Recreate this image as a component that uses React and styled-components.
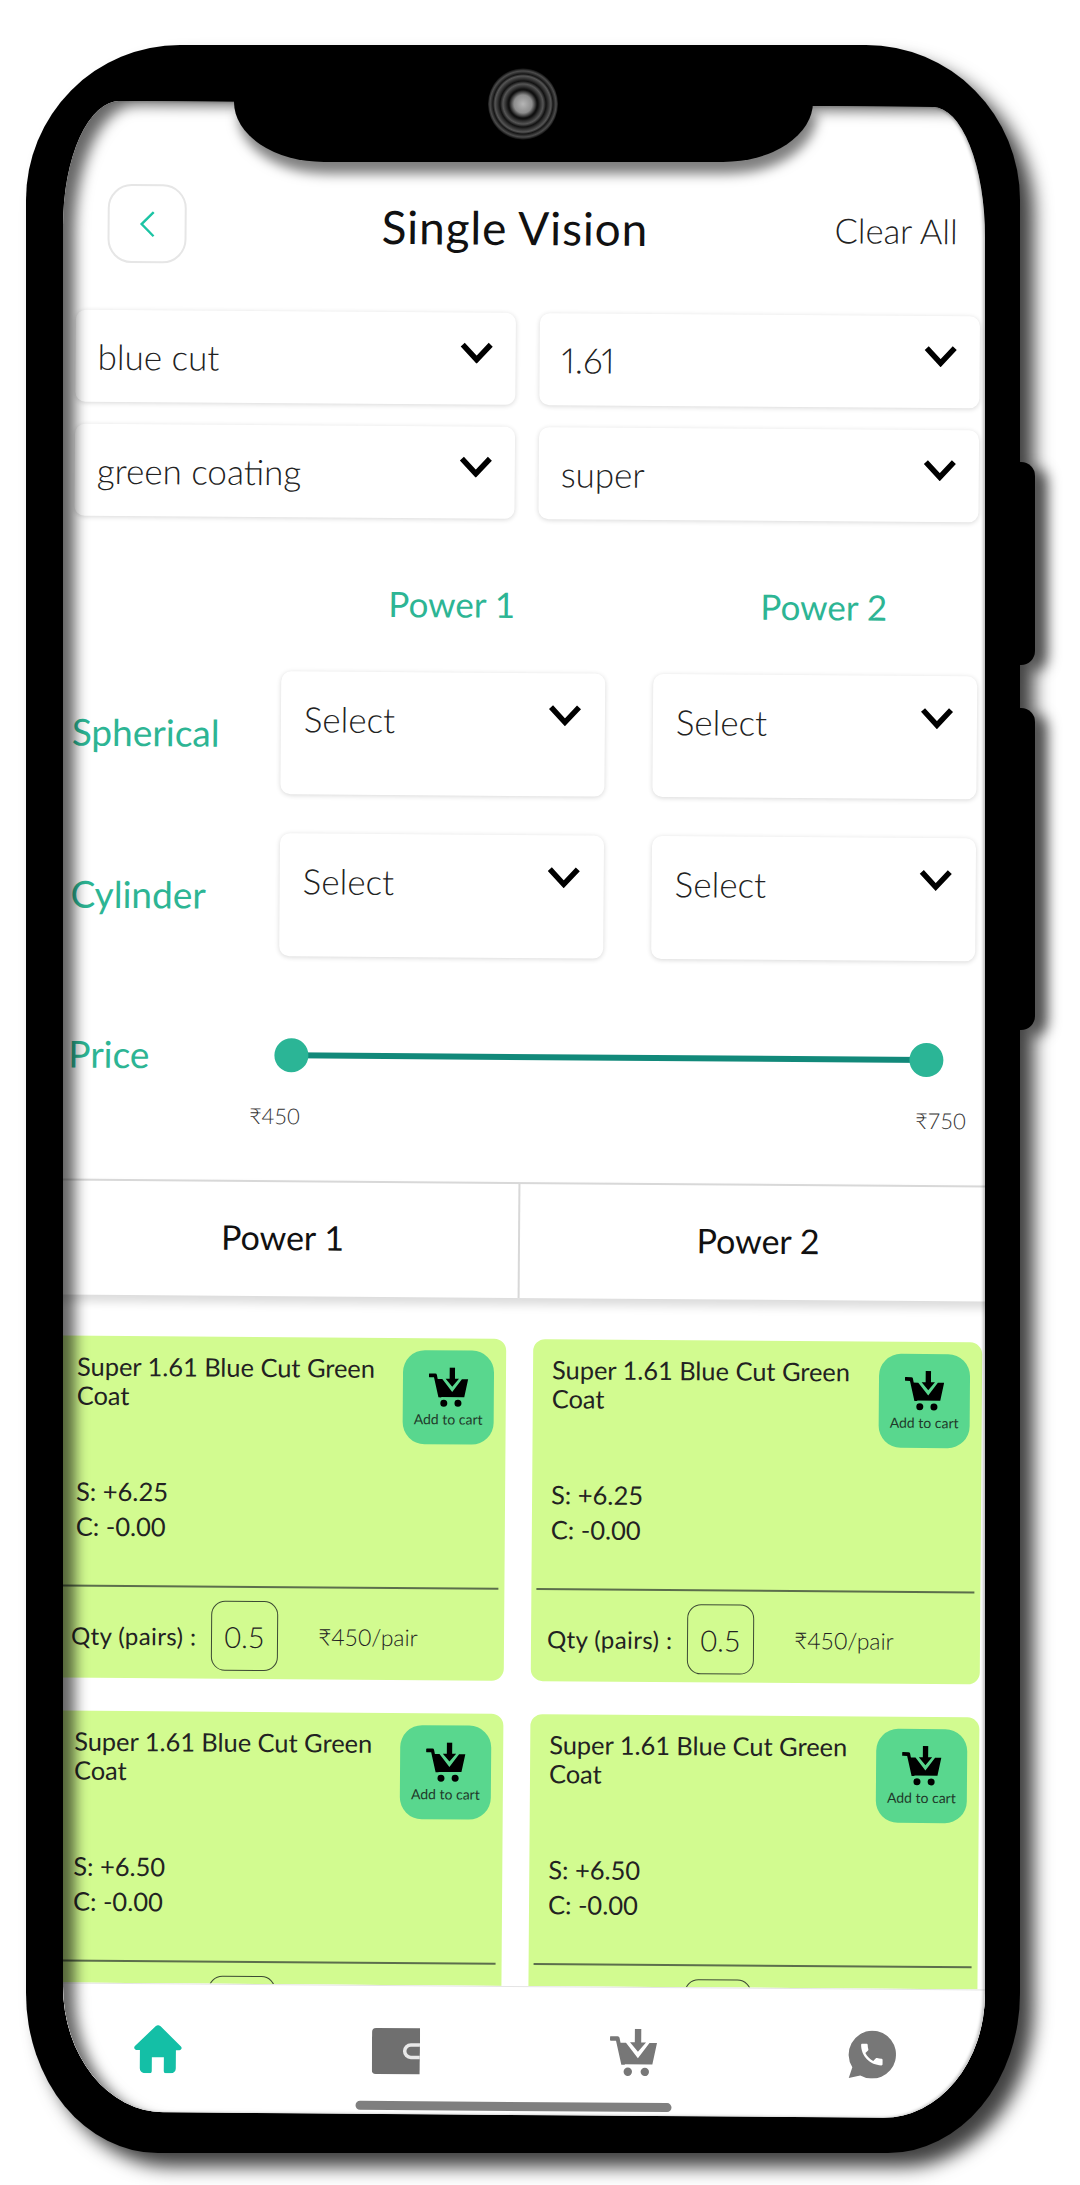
import styled, { createGlobalStyle } from "styled-components";

const GlobalStyle = createGlobalStyle`
  html, body {
    margin: 0;
    width: 1080px;
    height: 2185px;
    overflow: hidden;
    background: #fff;
  }
  * { box-sizing: border-box; }
`;

const Phone = styled.div`
  position: relative;
  width: 994px;
  height: 2108px;
  margin: 45px 0 0 26px;
  padding: 59px 35px 38px 37px;
  background: #000;
  border-radius: 154px 154px 132px 132px / 155px 155px 160px 160px;
  box-shadow: 14px 14px 18px rgba(0, 0, 0, 0.75);
  font-family: Lato, "Noto Sans", sans-serif;
`;

const SideButton = styled.div`
  position: absolute;
  right: -15px;
  top: ${(p) => p.$top}px;
  width: 16px;
  height: ${(p) => p.$height}px;
  background: #000;
  border-radius: 0 14px 14px 0;
  box-shadow: 12px 6px 14px rgba(0, 0, 0, 0.7);
`;

const Notch = styled.div`
  position: absolute;
  z-index: 6;
  left: 208px;
  top: 56px;
  width: 579px;
  height: 61px;
  background: #000;
  border-radius: 0 0 90px 90px / 0 0 60px 60px;
  box-shadow: 4px 12px 12px rgba(0, 0, 0, 0.5);
`;

const Camera = styled.div`
  position: absolute;
  left: 254px;
  top: -33px;
  width: 70px;
  height: 72px;
  border-radius: 50%;
  background: radial-gradient(
    circle,
    #b5b5b5 0,
    #8d8d8d 9px,
    #111 14px,
    #111 15px,
    #555 20px,
    #111 23px,
    #555 28px,
    #151515 30px,
    #4c4c4c 33px,
    #000 36px
  );
`;

const Screen = styled.div`
  position: relative;
  width: 922px;
  height: 2011px;
  background: #fff;
  overflow: hidden;
  border-radius: 57px 52px 102px 100px / 125px 130px 125px 125px;
  transform: skewY(0.43deg);

  &::after {
    content: "";
    position: absolute;
    inset: 0;
    z-index: 5;
    border-radius: inherit;
    pointer-events: none;
    box-shadow: inset 16px 8px 14px -4px rgba(0, 0, 0, 0.6),
      inset -2px 0 3px rgba(0, 0, 0, 0.25);
  }
`;

const Content = styled.div`
  display: flex;
  flex-direction: column;
  height: 100%;
  transform: skewX(-0.43deg);
`;

const Header = styled.header`
  display: flex;
  align-items: center;
  flex-shrink: 0;
  height: 79px;
  margin-top: 83px;
  padding: 0 34px 0 38px;
`;

const BackButton = styled.div`
  display: flex;
  align-items: center;
  justify-content: center;
  width: 79px;
  height: 79px;
  border: 2px solid #e6e6e6;
  border-radius: 24px;
`;

const Title = styled.h1`
  margin: 3px 0 0 195px;
  font-size: 46px;
  font-weight: 400;
  line-height: 56px;
  letter-spacing: 0.85px;
  color: #111;
`;

const ClearAll = styled.div`
  margin: 2px 0 0 auto;
  font-size: 34.5px;
  font-weight: 300;
  line-height: 44px;
  color: #222;
`;

const Filters = styled.div`
  display: grid;
  flex-shrink: 0;
  grid-template-columns: 440px 440px;
  gap: 22px 24px;
  margin-top: 47px;
  padding-left: 7px;
`;

const Box = styled.div`
  display: flex;
  justify-content: space-between;
  background: #fff;
  border-radius: 10px;
  box-shadow: 0 1px 5px rgba(0, 0, 0, 0.16);
`;

const FilterBox = styled(Box)`
  height: 92px;
  align-items: center;
  padding: 0 22px;
`;

const BoxText = styled.span`
  font-size: 35px;
  font-weight: 300;
  line-height: 38px;
  font-variant-numeric: proportional-nums;
  color: #222;
`;

const FilterChevron = styled.svg`
  width: 34px;
  height: 22px;
  margin-top: -12px;
`;

const PowerGrid = styled.div`
  display: grid;
  flex-shrink: 0;
  grid-template-columns: 161px 324px 324px;
  gap: 39px 48px;
  align-items: center;
  margin-top: 55px;
  padding-left: 6px;
`;

const PowerHeading = styled.div`
  padding-left: 16px;
  font-size: 35px;
  line-height: 60px;
  text-align: center;
  color: #2db594;
`;

const SideLabel = styled.div`
  font-size: 37px;
  line-height: 44px;
  color: #2db594;
`;

const SelectBox = styled(Box)`
  height: 123px;
  align-items: flex-start;
  padding: 28px 23px;
`;

const SelectChevron = styled(FilterChevron)`
  margin-top: 3px;
`;

const PriceRow = styled.div`
  display: flex;
  flex-shrink: 0;
  align-items: center;
  height: 34px;
  margin-top: 82px;
  padding-left: 5px;
`;

const PriceLabel = styled(SideLabel)`
  width: 223px;
  margin-top: -1px;
`;

const Track = styled.div`
  position: relative;
  width: 635px;
  height: 6px;
  background: #12897a;
`;

const Thumb = styled.div`
  position: absolute;
  top: -14px;
  left: ${(p) => p.$left}px;
  width: 34px;
  height: 34px;
  border-radius: 50%;
  background: #2bb596;
`;

const RangeLabels = styled.div`
  display: flex;
  flex-shrink: 0;
  justify-content: space-between;
  width: 717px;
  margin: 30px 0 0 186px;
  font-size: 22px;
  font-weight: 300;
  line-height: 28px;
  color: #333;
`;

const Tabs = styled.div`
  position: relative;
  z-index: 2;
  display: grid;
  flex-shrink: 0;
  grid-template-columns: 478px 1fr;
  height: 116px;
  margin: 50px -20px 0;
  background: #fff;
  border-top: 2px solid #d8d8d8;
  box-shadow: 0 7px 10px rgba(0, 0, 0, 0.14);
`;

const Tab = styled.div`
  display: flex;
  align-items: center;
  justify-content: center;
  padding: 0 ${(p) => (p.$last ? 8 : 0)}px 5px ${(p) => (p.$last ? 0 : 5)}px;
  font-size: 34px;
  color: #111;
  border-right: ${(p) => (p.$last ? "none" : "2px solid #d8d8d8")};
`;

const Listing = styled.div`
  flex: 1;
  min-height: 0;
  margin: 0 -20px;
  padding-top: 41px;
  overflow: hidden;
`;

const CardGrid = styled.div`
  display: grid;
  grid-template-columns: 465px 449px;
  gap: 33px 27px;
`;

const Card = styled.article`
  display: flex;
  flex-direction: column;
  height: 342px;
  padding-left: ${(p) => p.$inset}px;
  background: #d2fb90;
  border-radius: 12px;
  color: #222;
`;

const CardTop = styled.div`
  display: flex;
  flex-shrink: 0;
  justify-content: space-between;
  height: 118px;
  padding: 12px 12px 0 0;
`;

const CardTitle = styled.div`
  width: 325px;
  padding-top: 4px;
  font-size: 25.4px;
  line-height: 29px;
`;

const CartButton = styled.div`
  display: flex;
  flex-direction: column;
  align-items: center;
  flex-shrink: 0;
  width: 91px;
  height: 94px;
  padding-top: 17px;
  background: #59d78e;
  border-radius: 22px;
`;

const CartCaption = styled.span`
  margin-top: 3px;
  font-size: 14px;
  line-height: 18px;
  color: #1f3a2a;
`;

const Specs = styled.div`
  flex-shrink: 0;
  height: 70px;
  margin-top: 20px;
  font-size: 25.5px;
  line-height: 35px;
`;

const Rule = styled.div`
  flex-shrink: 0;
  height: 2px;
  margin: 41px 6px 0 ${(p) => (p.$first ? -p.$inset : 5 - p.$inset)}px;
  background: #5c6e4c;
`;

const QtyRow = styled.div`
  display: flex;
  flex-shrink: 0;
  align-items: center;
  height: 70px;
  margin: 13px 0 0 ${(p) => (p.$first ? -4 : -3)}px;
`;

const QtyLabel = styled.span`
  width: 140px;
  font-size: 24px;
  font-weight: 400;
  letter-spacing: 0.4px;
`;

const QtyBox = styled.div`
  display: flex;
  align-items: center;
  justify-content: center;
  width: 67px;
  height: 70px;
  border: 1.5px solid #3c4a34;
  border-radius: 14px;
  font-size: 29px;
  font-weight: 300;
`;

const UnitPrice = styled.span`
  margin-left: 40px;
  font-size: 23px;
  font-weight: 300;
  color: #222;
`;

const Nav = styled.nav`
  display: flex;
  flex-direction: column;
  flex-shrink: 0;
  height: 129px;
  margin: 0 -20px;
  padding: 41px 0 0 98px;
  background: #fff;
  position: relative;
  z-index: 2;
  border-top: 1px solid #e4e4e4;
`;

const NavIcons = styled.div`
  display: flex;
  gap: 190px;
`;

const NavIcon = styled.svg`
  flex-shrink: 0;
  width: 48px;
  height: 48px;
`;

const HomeBar = styled.div`
  width: 316px;
  height: 9px;
  margin: 26px 0 0 222px;
  border-radius: 5px;
  background: #7f7f7f;
`;

function Chevron({ as: Comp = FilterChevron }) {
  return (
    <Comp viewBox="0 0 34 22" fill="none">
      <polyline points="3,3 17,18 31,3" stroke="#000" strokeWidth="5.5" />
    </Comp>
  );
}

function CartIcon({ size, color }) {
  return (
    <svg width={size} height={size} viewBox="0 0 48 48" fill={color}>
      <path d="M1 7.5h6.5a2 2 0 0 1 2 1.6L15 36h-3.5L6 12H1a2.2 2.2 0 0 1 0-4.5z" />
      <path d="M9 14h7l12 15.5L39.5 14H47l-4.5 21.5H14z" />
      <path d="M24.8 0h6.4v13.5H36L28 23l-8-9.5h4.8z" />
      <circle cx="18" cy="43" r="4.2" />
      <circle cx="35" cy="43" r="4.2" />
    </svg>
  );
}

const cards = [
  { s: "+6.25", first: true },
  { s: "+6.25", first: false },
  { s: "+6.50", first: true },
  { s: "+6.50", first: false },
];

export default function App() {
  return (
    <>
      <GlobalStyle />
      <Phone>
        <SideButton $top={417} $height={203} />
        <SideButton $top={663} $height={322} />
        <Notch>
          <Camera />
        </Notch>
        <Screen>
          <Content>
            <Header>
              <BackButton>
                <svg width="16" height="26" viewBox="0 0 16 26" fill="none">
                  <polyline points="14,1 2,13 14,25" stroke="#1cc4a4" strokeWidth="2.4" />
                </svg>
              </BackButton>
              <Title>Single Vision</Title>
              <ClearAll>Clear All</ClearAll>
            </Header>

            <Filters>
              {["blue cut", "1.61", "green coating", "super"].map((v) => (
                <FilterBox key={v}>
                  <BoxText>{v}</BoxText>
                  <Chevron />
                </FilterBox>
              ))}
            </Filters>

            <PowerGrid>
              <span />
              <PowerHeading>Power 1</PowerHeading>
              <PowerHeading>Power 2</PowerHeading>
              <SideLabel>Spherical</SideLabel>
              <SelectBox>
                <BoxText>Select</BoxText>
                <Chevron as={SelectChevron} />
              </SelectBox>
              <SelectBox>
                <BoxText>Select</BoxText>
                <Chevron as={SelectChevron} />
              </SelectBox>
              <SideLabel>Cylinder</SideLabel>
              <SelectBox>
                <BoxText>Select</BoxText>
                <Chevron as={SelectChevron} />
              </SelectBox>
              <SelectBox>
                <BoxText>Select</BoxText>
                <Chevron as={SelectChevron} />
              </SelectBox>
            </PowerGrid>

            <PriceRow>
              <PriceLabel>Price</PriceLabel>
              <Track>
                <Thumb $left={-17} />
                <Thumb $left={618} />
              </Track>
            </PriceRow>
            <RangeLabels>
              <span>₹450</span>
              <span>₹750</span>
            </RangeLabels>

            <Tabs>
              <Tab>Power 1</Tab>
              <Tab $last>Power 2</Tab>
            </Tabs>

            <Listing>
              <CardGrid>
                {cards.map((c, i) => {
                  const inset = c.first ? 36 : 19;
                  return (
                    <Card key={i} $inset={inset}>
                      <CardTop>
                        <CardTitle>Super 1.61 Blue Cut Green Coat</CardTitle>
                        <CartButton>
                          <CartIcon size={40} color="#000" />
                          <CartCaption>Add to cart</CartCaption>
                        </CartButton>
                      </CardTop>
                      <Specs>
                        S: {c.s}
                        <br />
                        C: -0.00
                      </Specs>
                      <Rule $first={c.first} $inset={inset} />
                      <QtyRow $first={c.first}>
                        <QtyLabel>Qty (pairs) :</QtyLabel>
                        <QtyBox>0.5</QtyBox>
                        <UnitPrice>₹450/pair</UnitPrice>
                      </QtyRow>
                    </Card>
                  );
                })}
              </CardGrid>
            </Listing>

            <Nav>
              <NavIcons>
                <NavIcon viewBox="0 0 48 48" fill="#14bfa6">
                  <path d="M21.5 1a3.5 3.5 0 0 1 5 0l20.5 20a2.2 2.2 0 0 1-1.5 3.8H42V43a5 5 0 0 1-5 5h-5a2 2 0 0 1-2-2V32H18v14a2 2 0 0 1-2 2h-5a5 5 0 0 1-5-5V24.8H2.5A2.2 2.2 0 0 1 1 21z" />
                </NavIcon>
                <NavIcon viewBox="0 0 48 48" fill="#6f6f6f">
                  <path d="M4 1h44v46H4a4 4 0 0 1-4-4V5a4 4 0 0 1 4-4z" />
                  <path d="M48 16H39a8 8 0 0 0 0 16h9v-3.5h-9a4.5 4.5 0 0 1 0-9h9z" fill="#e8e8e8" />
                </NavIcon>
                <CartIcon size={48} color="#777" />
                <NavIcon viewBox="0 0 48 48" fill="#777">
                  <path d="M24 0a24 24 0 1 1-11.5 45L1 47.5l3.5-10.6A24 24 0 0 1 24 0z" />
                  <path
                    transform="translate(9.5 9.5) scale(1.2)"
                    fill="#fff"
                    d="M6.62 10.79c1.44 2.83 3.76 5.14 6.59 6.59l2.2-2.2c.27-.27.67-.36 1.02-.24 1.12.37 2.33.57 3.57.57.55 0 1 .45 1 1V20c0 .55-.45 1-1 1-9.39 0-17-7.61-17-17 0-.55.45-1 1-1h3.5c.55 0 1 .45 1 1 0 1.25.2 2.45.57 3.57.11.35.03.74-.25 1.02l-2.2 2.2z"
                  />
                </NavIcon>
              </NavIcons>
              <HomeBar />
            </Nav>
          </Content>
        </Screen>
      </Phone>
    </>
  );
}
